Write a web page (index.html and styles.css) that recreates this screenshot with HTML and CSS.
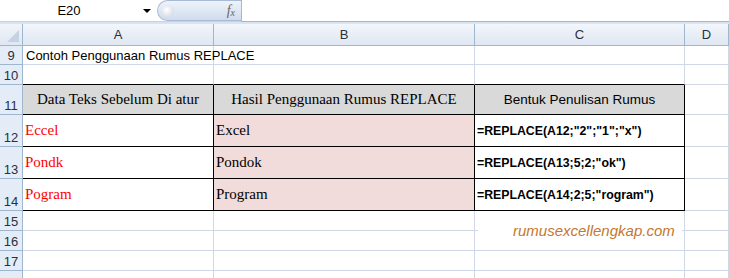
FILE: index.html
```html
<!DOCTYPE html>
<html>
<head>
<meta charset="utf-8">
<link rel="stylesheet" href="styles.css">
</head>
<body>
<div class="fbar">
  <div class="namebox"><span class="nbtext">E20</span><span class="nbarrow"></span></div>
  <div class="fxbtn"><span class="knob"></span><span class="fx">f<sub>x</sub></span></div>
  <div class="finput"></div>
</div>
<div class="sheet">
  <div class="corner"><svg width="12" height="12" viewBox="0 0 12 12"><polygon points="12,0 12,12 0,12" fill="#c5d2e3"/></svg></div>
  <div class="ch">A</div><div class="ch">B</div><div class="ch">C</div><div class="ch">D</div>

  <div class="rh">9</div><div class="c title">Contoh Penggunaan Rumus REPLACE</div><div class="c"></div><div class="c"></div><div class="c"></div>

  <div class="rh">10</div><div class="c tb"></div><div class="c tb"></div><div class="c tb"></div><div class="c"></div>

  <div class="rh">11</div><div class="c t th serif">Data Teks Sebelum Di atur</div><div class="c t th serif">Hasil Penggunaan Rumus REPLACE</div><div class="c t th sans">Bentuk Penulisan Rumus</div><div class="c"></div>

  <div class="rh">12</div><div class="c t serif red">Eccel</div><div class="c t serif pink">Excel</div><div class="c t f">=REPLACE(A12;"2";"1";"x")</div><div class="c"></div>

  <div class="rh">13</div><div class="c t serif red">Pondk</div><div class="c t serif pink">Pondok</div><div class="c t f">=REPLACE(A13;5;2;"ok")</div><div class="c"></div>

  <div class="rh">14</div><div class="c t serif red">Pogram</div><div class="c t serif pink">Program</div><div class="c t f">=REPLACE(A14;2;5;"rogram")</div><div class="c"></div>

  <div class="rh">15</div><div class="c"></div><div class="c"></div><div class="c"></div><div class="c"></div>

  <div class="rh">16</div><div class="c"></div><div class="c"></div><div class="c"></div><div class="c"></div>

  <div class="rh">17</div><div class="c"></div><div class="c"></div><div class="c"></div><div class="c"></div>

  <div class="rh"></div><div class="c"></div><div class="c"></div><div class="c"></div><div class="c"></div>

  <div class="wm">rumusexcellengkap.com</div>
</div>
</body>
</html>
```

FILE: styles.css
```css
* { box-sizing: border-box; }
html, body { margin: 0; padding: 0; }
body {
  width: 729px;
  height: 278px;
  overflow: hidden;
  background: #dae4f0;
  font-family: "Liberation Sans", Arial, sans-serif;
}
.fbar {
  height: 22px;
  display: flex;
  background: #ffffff;
  border-bottom: 1px solid #c6d3e3;
}
.namebox {
  width: 157px;
  display: flex;
  align-items: center;
  background: #fff;
}
.nbtext {
  width: 138px;
  text-align: center;
  font-size: 13px;
  color: #000;
}
.nbarrow {
  margin-left: 5px;
  width: 0; height: 0;
  border-left: 4px solid transparent;
  border-right: 4px solid transparent;
  border-top: 4px solid #000;
}
.fxbtn {
  width: 84px;
  height: 21px;
  border-radius: 11px 0 0 11px;
  background: linear-gradient(#eef3fa, #cfdcee);
  border: 1px solid #a9bbd4;
  border-right: none;
  display: flex;
  align-items: center;
  justify-content: space-between;
  padding: 0 6px 0 4px;
}
.knob {
  width: 12px; height: 12px;
  border-radius: 50%;
  background: radial-gradient(circle at 40% 40%, #ffffff, #c9d3e0);
}
.fx {
  font-family: "Liberation Serif", serif;
  font-style: italic;
  font-size: 14px;
  color: #666;
}
.fx sub { font-size: 10px; vertical-align: -1px; }
.finput {
  flex: 1;
  height: 22px;
  border: 1px solid #a5b6cd;
  border-right: none;
  border-top: none;
  background: #fff;
}
.sheet {
  position: relative;
  margin-top: 2px;
  display: grid;
  grid-template-columns: 23px 191px 261px 210px 44px;
  grid-template-rows: 22px 19px 20px 30px 32px 32px 32px 20px 20px 20px 20px;
  background: #fff;
}
.corner {
  background: linear-gradient(#f1f5fa, #dfe7f2);
  border-right: 1px solid #9eb6ce;
  border-bottom: 1px solid #9eb6ce;
  display: flex;
  align-items: flex-end;
  justify-content: flex-end;
  padding: 0 3px 3px 0;
}
.ch {
  background: linear-gradient(#f3f6fb, #dfe7f2);
  border-right: 1px solid #9eb6ce;
  border-bottom: 1px solid #9eb6ce;
  display: flex;
  align-items: center;
  justify-content: center;
  font-size: 13px;
  color: #27313e;
}
.rh {
  background: #e4ecf7;
  border-right: 1px solid #9eb6ce;
  border-bottom: 1px solid #9eb6ce;
  display: flex;
  align-items: flex-end;
  justify-content: center;
  font-size: 13px;
  color: #27313e;
  padding-bottom: 1px;
}
.c {
  border-right: 1px solid #d0d7e5;
  border-bottom: 1px solid #d0d7e5;
  display: flex;
  align-items: center;
  padding-left: 2px;
  white-space: nowrap;
  min-width: 0;
}
.title {
  font-size: 13px;
  padding-left: 3px;
}
.tb { border-bottom-color: #000; }
.t {
  border-right-color: #000;
  border-bottom-color: #000;
}
.th {
  background: #d9d9d9;
  justify-content: center;
  padding-left: 0;
}
.serif {
  font-family: "Liberation Serif", "Times New Roman", serif;
  font-size: 15px;
}
.sans {
  font-size: 13.5px;
}
.red { color: #ff0000; }
.pink { background: #f2dcdb; }
.f {
  font-size: 12.3px;
  font-weight: bold;
}
.wm {
  position: absolute;
  left: 478px;
  top: 195px;
  width: 204px;
  height: 22px;
  background: #fff;
  padding-left: 35px;
  display: flex;
  align-items: center;
  font-style: italic;
  font-size: 15px;
  color: #c5772d;
  white-space: nowrap;
}
```
